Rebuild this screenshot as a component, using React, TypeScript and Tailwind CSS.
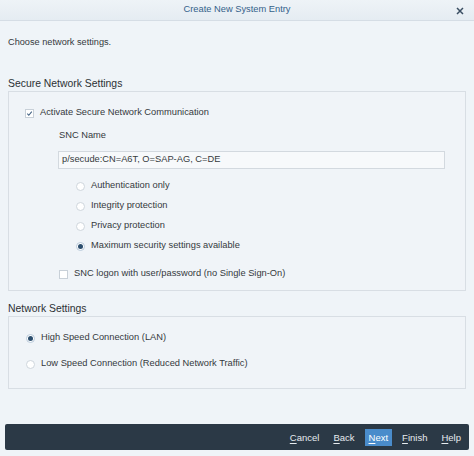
import React from 'react';

const font = { fontFamily: '"Liberation Sans", Arial, sans-serif' };

const Radio = ({ checked }: { checked?: boolean }) => (
  <span
    className={`flex h-[9px] w-[9px] shrink-0 items-center justify-center rounded-full border bg-white ${checked ? 'border-[#b9cadb]' : 'border-[#cfd6dd]'}`}
  >
    {checked && <span className="h-[5px] w-[5px] rounded-full bg-[#2c4e6e]" />}
  </span>
);

const Check = ({ checked }: { checked?: boolean }) => (
  <span className="flex h-[9px] w-[9px] shrink-0 items-center justify-center border border-[#c8d0d8] bg-white">
    {checked && (
      <svg width="7" height="7" viewBox="0 0 8 8">
        <path d="M1.5 4.2 L3.2 6 L6.6 1.8" fill="none" stroke="#3f5f80" strokeWidth="1.2" />
      </svg>
    )}
  </span>
);

const Row = ({ children, className = '' }: { children: React.ReactNode; className?: string }) => (
  <div className={`flex h-[20px] items-center gap-[6px] ${className}`}>{children}</div>
);

const FooterBtn = ({ label, active }: { label: string; active?: boolean }) => (
  <button
    className={`h-[17px] px-[4px] text-[9.5px] leading-[17px] ${active ? 'bg-[#4a8ccb] text-white' : 'text-[#e6ebef]'}`}
  >
    <span className="underline underline-offset-2">{label[0]}</span>
    {label.slice(1)}
  </button>
);

export default function App() {
  return (
    <div className="h-[456px] w-[474px] bg-[#eff4f8] text-[#35393d]" style={font}>
      <div className="relative flex h-[21px] items-center justify-center border-b border-[#d5dde5] bg-gradient-to-b from-[#eef3f7] to-[#e5ecf2]">
        <span className="text-[9.3px] text-[#34618a]">Create New System Entry</span>
        <svg className="absolute right-[10px] top-[7px]" width="8" height="8" viewBox="0 0 8 8">
          <path d="M1 1 L7 7 M7 1 L1 7" stroke="#3a4e62" strokeWidth="1.5" />
        </svg>
      </div>

      <div className="px-[8px]">
        <div className="mt-[14px] h-[14px] text-[9.2px] leading-[14px]">Choose network settings.</div>

        <div className="mt-[28px] h-[14px] text-[10.4px] leading-[14px] text-[#2c3034]">Secure Network Settings</div>
        <div className="h-[200px] border border-[#d8dee4] bg-[#f0f4f8] pl-[16px] pt-[11px] text-[9.3px]">
          <Row>
            <Check checked />
            <span>Activate Secure Network Communication</span>
          </Row>
          <div className="ml-[34px] mt-[5px] h-[14px] leading-[14px]">SNC Name</div>
          <div className="ml-[33px] mt-[9px] flex h-[18px] w-[387px] items-center border border-[#d3d9df] bg-[#f7f9fb] px-[3px]">
            p/secude:CN=A6T, O=SAP-AG, C=DE
          </div>
          <div className="ml-[51px] mt-[7px]">
            <Row>
              <Radio />
              <span>Authentication only</span>
            </Row>
            <Row>
              <Radio />
              <span>Integrity protection</span>
            </Row>
            <Row>
              <Radio />
              <span>Privacy protection</span>
            </Row>
            <Row>
              <Radio checked />
              <span>Maximum security settings available</span>
            </Row>
          </div>
          <Row className="ml-[34px] mt-[8px]">
            <Check />
            <span>SNC logon with user/password (no Single Sign-On)</span>
          </Row>
        </div>

        <div className="mt-[11px] h-[14px] text-[10.4px] leading-[14px] text-[#2c3034]">Network Settings</div>
        <div className="h-[73px] border border-[#d8dee4] bg-[#f0f4f8] pl-[17px] pt-[11px] text-[9.3px]">
          <Row>
            <Radio checked />
            <span>High Speed Connection (LAN)</span>
          </Row>
          <Row className="mt-[6px]">
            <Radio />
            <span>Low Speed Connection (Reduced Network Traffic)</span>
          </Row>
        </div>
      </div>

      <div className="mx-[5px] mt-[35px] flex h-[26px] items-center justify-end gap-[6px] rounded-[2px] bg-[#2b3946] pr-[4px]">
        <FooterBtn label="Cancel" />
        <FooterBtn label="Back" />
        <FooterBtn label="Next" active />
        <FooterBtn label="Finish" />
        <FooterBtn label="Help" />
      </div>
    </div>
  );
}
